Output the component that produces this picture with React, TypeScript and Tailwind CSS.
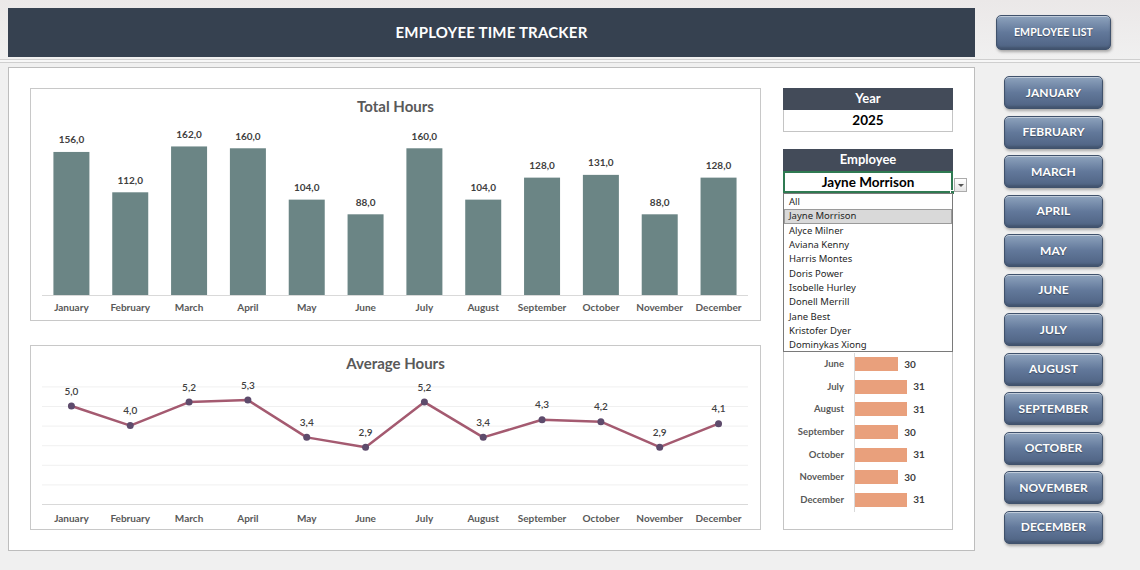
import React from 'react';

const months = ['January', 'February', 'March', 'April', 'May', 'June', 'July', 'August', 'September', 'October', 'November', 'December'];
const totals = [156, 112, 162, 160, 104, 88, 160, 104, 128, 131, 88, 128];
const averages = [5.0, 4.0, 5.2, 5.3, 3.4, 2.9, 5.2, 3.4, 4.3, 4.2, 2.9, 4.1];
const days = [31, 28, 31, 30, 31, 30, 31, 31, 30, 31, 30, 31];
const employees = ['All', 'Jayne Morrison', 'Alyce Milner', 'Aviana Kenny', 'Harris Montes', 'Doris Power', 'Isobelle Hurley', 'Donell Merrill', 'Jane Best', 'Kristofer Dyer', 'Dominykas Xiong'];

const fmt = (v: number) => v.toFixed(1).replace('.', ',');
const cx = (i: number) => 11 + 58.83 * (i + 0.5);

function NavButton({ label, wide }: { label: string; wide?: boolean }) {
  return (
    <button
      className={`${wide ? 'w-[115px] h-[35px] text-[10.5px]' : 'w-[99px] h-[33px] text-[12px]'} rounded-[5px] border border-[#40526c] bg-gradient-to-b from-[#8ea3bd] via-[#62789a] to-[#4e6282] shadow-[inset_0_1px_0_rgba(255,255,255,0.45),inset_0_-2px_2px_rgba(0,0,0,0.15),1px_2px_3px_rgba(0,0,0,0.3)] font-bold text-white tracking-[0.1px] [text-shadow:0_1px_1px_rgba(0,0,0,0.35)]`}
    >
      {label}
    </button>
  );
}

function TotalHoursChart() {
  const base = 206;
  return (
    <div className="w-[731px] h-[233px] border border-[#c8c8c8] bg-white">
      <svg width={729} height={231}>
        <text x={364.5} y={23} textAnchor="middle" fontSize={15} fontWeight={700} fill="#595959">Total Hours</text>
        {totals.map((v, i) => {
          const h = v * 0.917;
          return (
            <g key={i}>
              <rect x={cx(i) - 18} y={base - h} width={36} height={h} fill="#6b8585" />
              <text x={cx(i)} y={base - h - 8.5} textAnchor="middle" fontSize={10} fontWeight={700} fill="#404040">{fmt(v)}</text>
              <text x={cx(i)} y={221.5} textAnchor="middle" fontSize={10} fontWeight={700} fill="#595959">{months[i]}</text>
            </g>
          );
        })}
        <line x1={11} x2={717} y1={base + 0.5} y2={base + 0.5} stroke="#d9d9d9" />
      </svg>
    </div>
  );
}

function AverageHoursChart() {
  const y = (v: number) => 158 - v * 19.6;
  const pts = averages.map((v, i) => `${cx(i)},${y(v)}`).join(' ');
  return (
    <div className="w-[731px] h-[185px] border border-[#c8c8c8] bg-white">
      <svg width={729} height={183}>
        <text x={364.5} y={23} textAnchor="middle" fontSize={15} fontWeight={700} fill="#595959">Average Hours</text>
        {[1, 2, 3, 4, 5, 6].map((g) => (
          <line key={g} x1={11} x2={717} y1={y(g) + 0.5} y2={y(g) + 0.5} stroke="#f0f0f0" />
        ))}
        <line x1={11} x2={717} y1={158.5} y2={158.5} stroke="#d9d9d9" />
        <polyline points={pts} fill="none" stroke="#a45a70" strokeWidth={2.5} strokeLinejoin="round" />
        {averages.map((v, i) => (
          <g key={i}>
            <circle cx={cx(i)} cy={y(v)} r={3.5} fill="#5e4b6c" />
            <text x={cx(i)} y={y(v) - 11.5} textAnchor="middle" fontSize={10} fill="#404040" fontWeight={600}>{fmt(v)}</text>
            <text x={cx(i)} y={175.5} textAnchor="middle" fontSize={10} fontWeight={700} fill="#595959">{months[i]}</text>
          </g>
        ))}
      </svg>
    </div>
  );
}

function EmployeePanel() {
  // rows January–May sit under the open dropdown, so only June onward is drawn
  const visible = months.map((m, i) => ({ m, d: days[i] })).slice(5);
  return (
    <div className="w-[170px] flex flex-col">
      <div className="h-[22px] bg-[#434b59] text-white font-bold text-[13px] flex items-center justify-center">Year</div>
      <div className="h-[22px] border border-t-0 border-[#c4c4c4] text-[13.5px] font-bold text-black flex items-center justify-center">2025</div>

      <div className="mt-[17px] h-[22px] bg-[#434b59] text-white font-bold text-[13px] flex items-center justify-center">Employee</div>
      <div className="relative h-[22px] border-2 border-[#2f7a52] text-[13.5px] font-bold text-black flex items-center justify-center">
        Jayne Morrison
        <span className="absolute right-[-4px] bottom-[-4px] w-[5px] h-[5px] bg-[#2f7a52] border border-white" />
        <span className="absolute right-[-16px] top-[5px] w-[13px] h-[14px] border border-[#ababab] bg-gradient-to-b from-white to-[#e6e6e6] flex items-center justify-center">
          <span className="w-0 h-0 border-l-[3px] border-r-[3px] border-t-[3px] border-l-transparent border-r-transparent border-t-[#555]" />
        </span>
        <div className="absolute left-[-2px] top-[20px] w-[170px] h-[159px] z-10 bg-white border border-[#7a7a7a] pt-[1px] font-['Noto_Sans',sans-serif] font-normal">
          {employees.map((n, i) => (
            <div
              key={n}
              className={`h-[14.35px] leading-[14.35px] pl-[5px] text-[9.5px] text-[#1f1f1f] ${i === 1 ? 'bg-[#d9d9d9] outline outline-1 outline-[#9a9a9a] -outline-offset-1' : ''}`}
            >
              {n}
            </div>
          ))}
        </div>
      </div>

      <div className="h-[337px] border border-t-0 border-[#c4c4c4] flex pt-[160px]">
        <div className="w-[70px] pr-[10px] flex flex-col">
          {visible.map(({ m }) => (
            <div key={m} className="h-[22.6px] flex items-center justify-end text-[9.5px] font-bold text-[#595959]">{m}</div>
          ))}
        </div>
        <div className="flex flex-col border-l border-[#d9d9d9] h-[159px]">
          {visible.map(({ m, d }) => (
            <div key={m} className="h-[22.6px] flex items-center">
              <div className="h-[14px] bg-[#e9a07c]" style={{ width: (d - 25.2) * 9 }} />
              <span className="ml-[6px] text-[10px] font-bold text-[#404040]">{d}</span>
            </div>
          ))}
        </div>
      </div>
    </div>
  );
}

export default function App() {
  return (
    <div className="w-[1140px] h-[570px] overflow-hidden bg-[#f0f0f0] font-['Lato',sans-serif]">
      <div className="h-[59px] pt-2 flex bg-gradient-to-b from-[#ebe8e8] to-[#f0f0f0]">
        <div className="ml-2 w-[967px] h-[49px] bg-[#364150] flex items-center justify-center text-white font-bold text-[15px] tracking-[0.2px]">
          EMPLOYEE TIME TRACKER
        </div>
        <div className="ml-[21px] mt-[7px]">
          <NavButton label="EMPLOYEE LIST" wide />
        </div>
      </div>
      <div className="h-[4px] border-t border-b border-[#cfcfcf] bg-[#f7f7f7]" />

      <div className="flex mt-[4px]">
        <div className="ml-2 w-[967px] h-[484px] bg-white border border-[#bdbdbd] flex pl-[21px] pt-[20px]">
          <div className="flex flex-col gap-[24px]">
            <TotalHoursChart />
            <AverageHoursChart />
          </div>
          <div className="ml-[22px]">
            <EmployeePanel />
          </div>
        </div>

        <div className="ml-[29px] mt-[9px] flex flex-col gap-[6.5px]">
          {months.map((m) => (
            <NavButton key={m} label={m.toUpperCase()} />
          ))}
        </div>
      </div>
    </div>
  );
}
